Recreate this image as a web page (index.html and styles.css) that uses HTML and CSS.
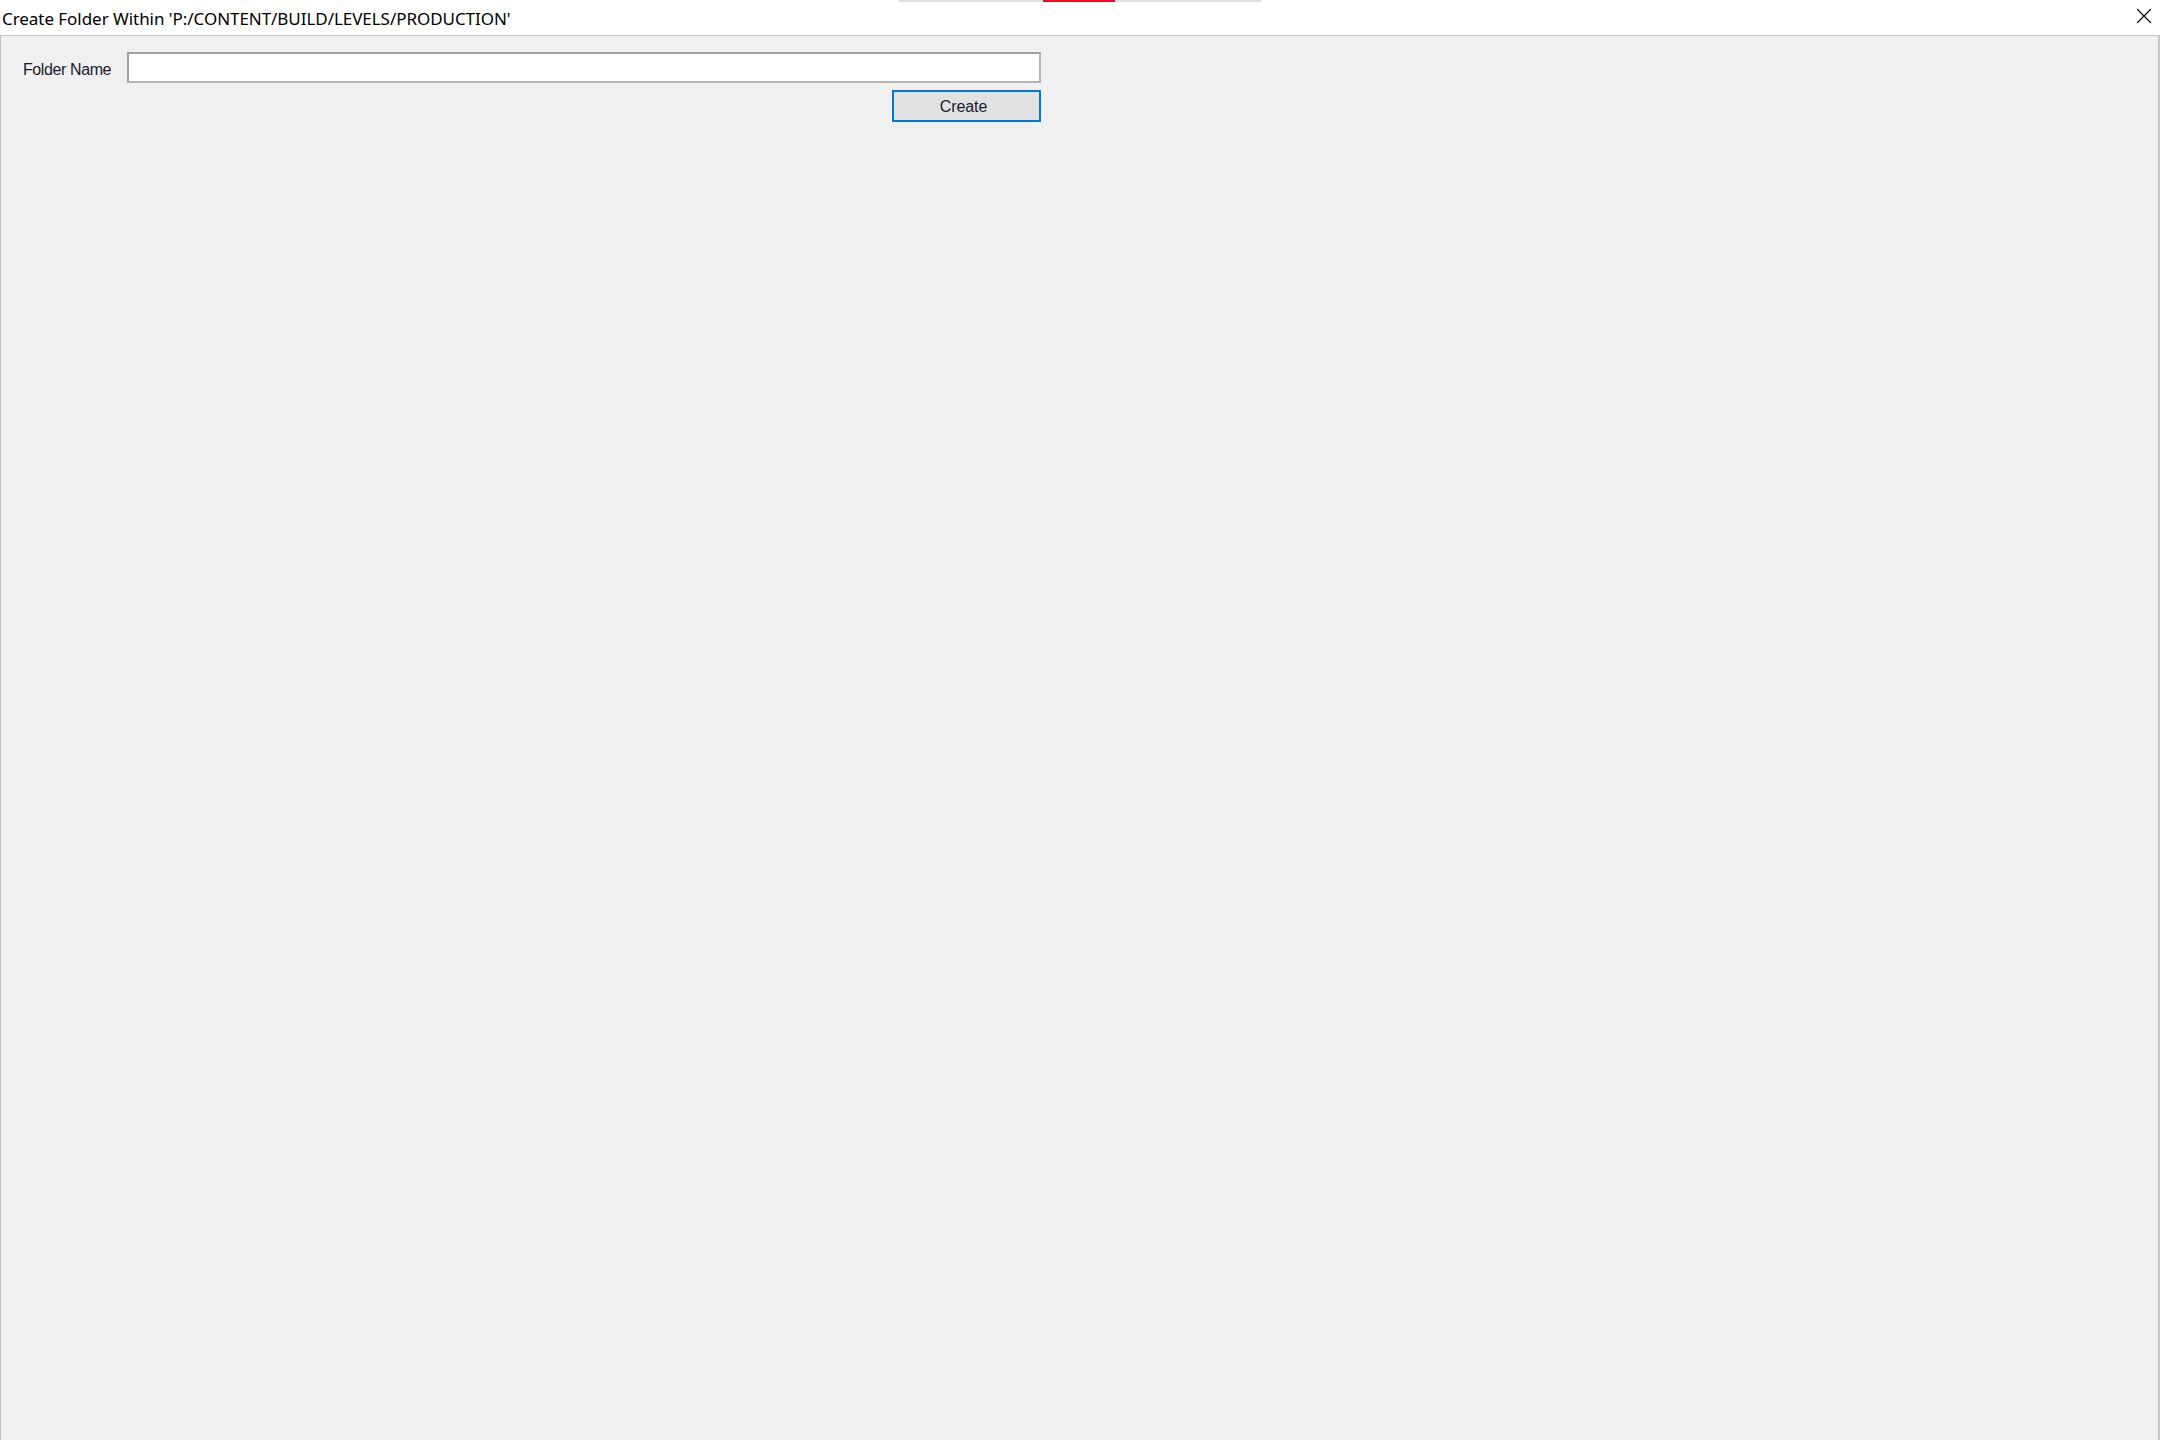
FILE: index.html
```html
<!DOCTYPE html>
<html lang="en">
<head>
<meta charset="utf-8">
<title>Create Folder</title>
<link rel="stylesheet" href="styles.css">
</head>
<body>
<div class="window">
  <div class="titlebar">
    <span class="title">Create Folder Within 'P:/CONTENT/BUILD/LEVELS/PRODUCTION'</span>
    <button class="close" aria-label="Close">
      <svg width="16" height="16" viewBox="0 0 16 16"><path d="M1 1 L15 15 M15 1 L1 15" stroke="#000" stroke-width="1.1" fill="none"/></svg>
    </button>
    <div class="loader"><div class="loader-fill"></div></div>
  </div>
  <div class="client">
    <div class="form">
      <div class="row">
        <label class="label" for="folder">Folder Name</label>
        <input class="field" id="folder" type="text">
      </div>
      <div class="actions">
        <button class="btn">Create</button>
      </div>
    </div>
  </div>
</div>
</body>
</html>
```
FILE: styles.css
```css
html, body {
  margin: 0;
  padding: 0;
  height: 100%;
  background: #f0f0f0;
}
.window {
  height: 100vh;
  display: flex;
  flex-direction: column;
  box-sizing: border-box;
}
.titlebar {
  position: relative;
  height: 35px;
  flex: 0 0 35px;
  background: #ffffff;
  border-bottom: 1px solid #c8c8c8;
  display: flex;
  align-items: center;
  justify-content: space-between;
  padding-left: 2px;
}
.title {
  font-family: "Noto Sans", "Open Sans", sans-serif;
  font-size: 17px;
  letter-spacing: -0.05px;
  color: #000;
  padding-top: 1px;
}
.close {
  background: transparent;
  border: 0;
  padding: 0;
  margin-right: 8px;
  margin-top: -4px;
  width: 16px;
  height: 16px;
  display: flex;
}
.loader {
  position: absolute;
  left: 899px;
  top: 0;
  width: 362px;
  height: 2px;
  background: #e0e0e0;
}
.loader-fill {
  margin-left: 144px;
  width: 72px;
  height: 2px;
  background: #e81123;
}
.client {
  flex: 1;
  background: #f0f0f0;
  border-left: 1px solid #c0c0c0;
  border-right: 2px solid #c8c8c8;
  padding: 16px 0 0 22px;
}
.form {
  width: 1018px;
  display: flex;
  flex-direction: column;
  gap: 7px;
}
.row {
  display: flex;
  align-items: center;
}
.label {
  width: 104px;
  flex: 0 0 104px;
  font-family: "Liberation Sans", Arial, sans-serif;
  font-size: 16px;
  letter-spacing: -0.4px;
  color: #1a1a2a;
  padding-top: 4px;
}
.field {
  flex: 1;
  height: 31px;
  box-sizing: border-box;
  margin: 0;
  background: #fff;
  border: 2px solid #a0a0a0;
  border-right-color: #b4b4b4;
  border-bottom-color: #b4b4b4;
  outline: none;
}
.actions {
  display: flex;
  justify-content: flex-end;
}
.btn {
  width: 149px;
  height: 32px;
  box-sizing: border-box;
  margin: 0;
  background: #e1e1e1;
  border: 2px solid #0078d7;
  box-shadow: inset 0 0 0 1px #d6e7f6;
  font-family: "Liberation Sans", Arial, sans-serif;
  font-size: 16px;
  letter-spacing: -0.1px;
  color: #1a1a2a;
  padding: 2px 6px 0 0;
}
```
